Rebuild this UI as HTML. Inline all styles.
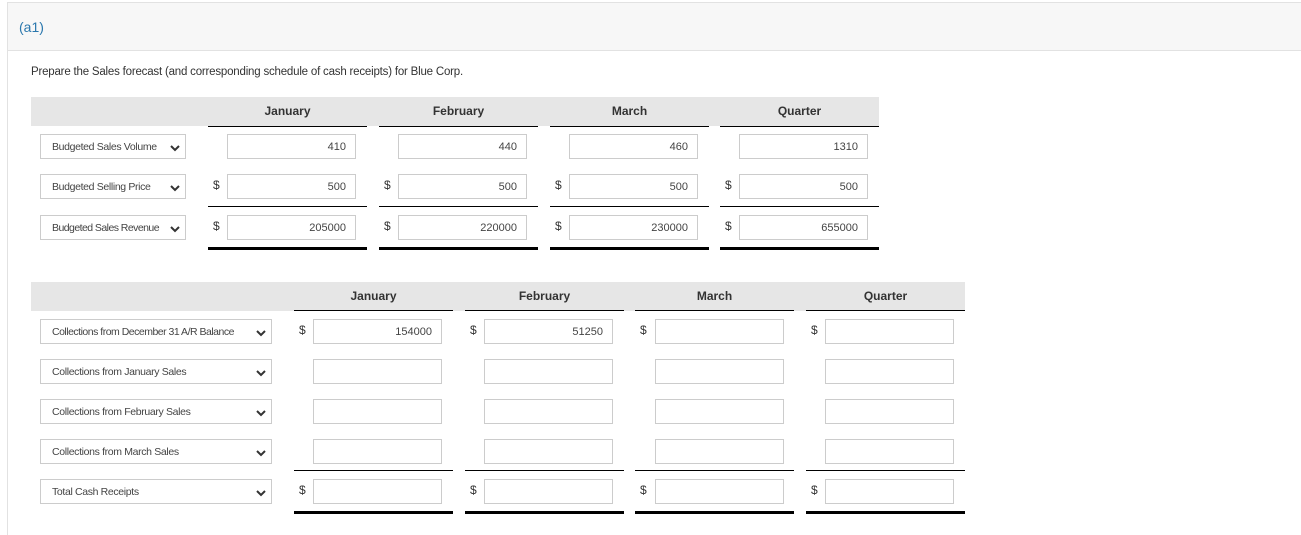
<!DOCTYPE html>
<html><head><meta charset="utf-8"><style>
*{margin:0;padding:0;box-sizing:border-box}
html,body{width:1301px;height:535px;overflow:hidden}
body{background:#fff;position:relative;font-family:"Liberation Sans",sans-serif;color:#333}
.a{position:absolute}
.box{left:7px;top:2px;width:1294px;height:533px;border:1px solid #e2e2e2;border-bottom:0;border-right:0;background:#fff}
.hd{left:8px;top:3px;width:1293px;height:48px;background:#f7f7f7;border-bottom:1px solid #e2e2e2}
.hbar{background:#e6e6e6;height:29px}
.hl{font-size:12px;font-weight:bold;color:#333;width:159px;text-align:center}
.ln{height:1px;background:#000;width:159px}
.tk{height:3px;background:#000;width:159px}
.in{width:129px;height:25px;border:1px solid #ccc;background:#fff;font-size:11px;text-align:right;padding-right:9px;line-height:25px;color:#444}
.sel{height:25px;border:1px solid #ccc;background:#fff;font-size:10.5px;line-height:25px;padding-left:11px;color:#444;letter-spacing:-0.35px;white-space:nowrap;overflow:hidden}
.sel svg{position:absolute;right:5px;top:9px}
.d{font-size:12px;color:#333}
</style></head><body>
<div class="a box"></div>
<div class="a hd"></div>
<div class="a" style="left:19px;top:19px;font-size:14px;color:#2a77ad">(a1)</div>
<div class="a" style="left:31px;top:66px;font-size:11.5px;color:#333;letter-spacing:-0.2px">Prepare the Sales forecast (and corresponding schedule of cash receipts) for Blue Corp.</div>

<div class="a hbar" style="left:31px;top:97px;width:848px"></div>
<div class="a hbar" style="left:31px;top:282px;width:934px"></div>

<div class="a hl" style="left:208px;top:104px">January</div>
<div class="a hl" style="left:379px;top:104px">February</div>
<div class="a hl" style="left:550px;top:104px">March</div>
<div class="a hl" style="left:720px;top:104px">Quarter</div>
<div class="a hl" style="left:294px;top:289px">January</div>
<div class="a hl" style="left:465px;top:289px">February</div>
<div class="a hl" style="left:635px;top:289px">March</div>
<div class="a hl" style="left:806px;top:289px">Quarter</div>

<div class="a ln" style="left:208px;top:126px"></div><div class="a ln" style="left:379px;top:126px"></div><div class="a ln" style="left:550px;top:126px"></div><div class="a ln" style="left:720px;top:126px"></div>
<div class="a ln" style="left:208px;top:206px"></div><div class="a ln" style="left:379px;top:206px"></div><div class="a ln" style="left:550px;top:206px"></div><div class="a ln" style="left:720px;top:206px"></div>
<div class="a tk" style="left:208px;top:247px"></div><div class="a tk" style="left:379px;top:247px"></div><div class="a tk" style="left:550px;top:247px"></div><div class="a tk" style="left:720px;top:247px"></div>
<div class="a ln" style="left:294px;top:310px"></div><div class="a ln" style="left:465px;top:310px"></div><div class="a ln" style="left:635px;top:310px"></div><div class="a ln" style="left:806px;top:310px"></div>
<div class="a ln" style="left:294px;top:470px"></div><div class="a ln" style="left:465px;top:470px"></div><div class="a ln" style="left:635px;top:470px"></div><div class="a ln" style="left:806px;top:470px"></div>
<div class="a tk" style="left:294px;top:511px"></div><div class="a tk" style="left:465px;top:511px"></div><div class="a tk" style="left:635px;top:511px"></div><div class="a tk" style="left:806px;top:511px"></div>

<div class="a sel" style="left:40px;top:134px;width:146px">Budgeted Sales Volume<svg width="10" height="8"><path d="M1 2L5 6L9 2" stroke="#333" stroke-width="2" fill="none"/></svg></div>
<div class="a sel" style="left:40px;top:174px;width:146px">Budgeted Selling Price<svg width="10" height="8"><path d="M1 2L5 6L9 2" stroke="#333" stroke-width="2" fill="none"/></svg></div>
<div class="a sel" style="left:40px;top:215px;width:146px;letter-spacing:-0.55px">Budgeted Sales Revenue<svg width="10" height="8"><path d="M1 2L5 6L9 2" stroke="#333" stroke-width="2" fill="none"/></svg></div>

<div class="a in" style="left:227px;top:134px">410</div><div class="a in" style="left:398px;top:134px">440</div><div class="a in" style="left:569px;top:134px">460</div><div class="a in" style="left:739px;top:134px">1310</div>
<div class="a in" style="left:227px;top:174px">500</div><div class="a in" style="left:398px;top:174px">500</div><div class="a in" style="left:569px;top:174px">500</div><div class="a in" style="left:739px;top:174px">500</div>
<div class="a in" style="left:227px;top:215px">205000</div><div class="a in" style="left:398px;top:215px">220000</div><div class="a in" style="left:569px;top:215px">230000</div><div class="a in" style="left:739px;top:215px">655000</div>
<div class="a d" style="left:213px;top:178px">$</div><div class="a d" style="left:384px;top:178px">$</div><div class="a d" style="left:555px;top:178px">$</div><div class="a d" style="left:725px;top:178px">$</div>
<div class="a d" style="left:213px;top:219px">$</div><div class="a d" style="left:384px;top:219px">$</div><div class="a d" style="left:555px;top:219px">$</div><div class="a d" style="left:725px;top:219px">$</div>

<div class="a sel" style="left:40px;top:319px;width:232px;letter-spacing:-0.5px">Collections from December 31 A/R Balance<svg width="10" height="8"><path d="M1 2L5 6L9 2" stroke="#333" stroke-width="2" fill="none"/></svg></div>
<div class="a sel" style="left:40px;top:359px;width:232px">Collections from January Sales<svg width="10" height="8"><path d="M1 2L5 6L9 2" stroke="#333" stroke-width="2" fill="none"/></svg></div>
<div class="a sel" style="left:40px;top:399px;width:232px">Collections from February Sales<svg width="10" height="8"><path d="M1 2L5 6L9 2" stroke="#333" stroke-width="2" fill="none"/></svg></div>
<div class="a sel" style="left:40px;top:439px;width:232px">Collections from March Sales<svg width="10" height="8"><path d="M1 2L5 6L9 2" stroke="#333" stroke-width="2" fill="none"/></svg></div>
<div class="a sel" style="left:40px;top:479px;width:232px">Total Cash Receipts<svg width="10" height="8"><path d="M1 2L5 6L9 2" stroke="#333" stroke-width="2" fill="none"/></svg></div>

<div class="a in" style="left:313px;top:319px">154000</div><div class="a in" style="left:484px;top:319px">51250</div><div class="a in" style="left:655px;top:319px"></div><div class="a in" style="left:825px;top:319px"></div>
<div class="a in" style="left:313px;top:359px"></div><div class="a in" style="left:484px;top:359px"></div><div class="a in" style="left:655px;top:359px"></div><div class="a in" style="left:825px;top:359px"></div>
<div class="a in" style="left:313px;top:399px"></div><div class="a in" style="left:484px;top:399px"></div><div class="a in" style="left:655px;top:399px"></div><div class="a in" style="left:825px;top:399px"></div>
<div class="a in" style="left:313px;top:439px"></div><div class="a in" style="left:484px;top:439px"></div><div class="a in" style="left:655px;top:439px"></div><div class="a in" style="left:825px;top:439px"></div>
<div class="a in" style="left:313px;top:479px"></div><div class="a in" style="left:484px;top:479px"></div><div class="a in" style="left:655px;top:479px"></div><div class="a in" style="left:825px;top:479px"></div>
<div class="a d" style="left:299px;top:323px">$</div><div class="a d" style="left:470px;top:323px">$</div><div class="a d" style="left:640px;top:323px">$</div><div class="a d" style="left:811px;top:323px">$</div>
<div class="a d" style="left:299px;top:483px">$</div><div class="a d" style="left:470px;top:483px">$</div><div class="a d" style="left:640px;top:483px">$</div><div class="a d" style="left:811px;top:483px">$</div>
</body></html>
